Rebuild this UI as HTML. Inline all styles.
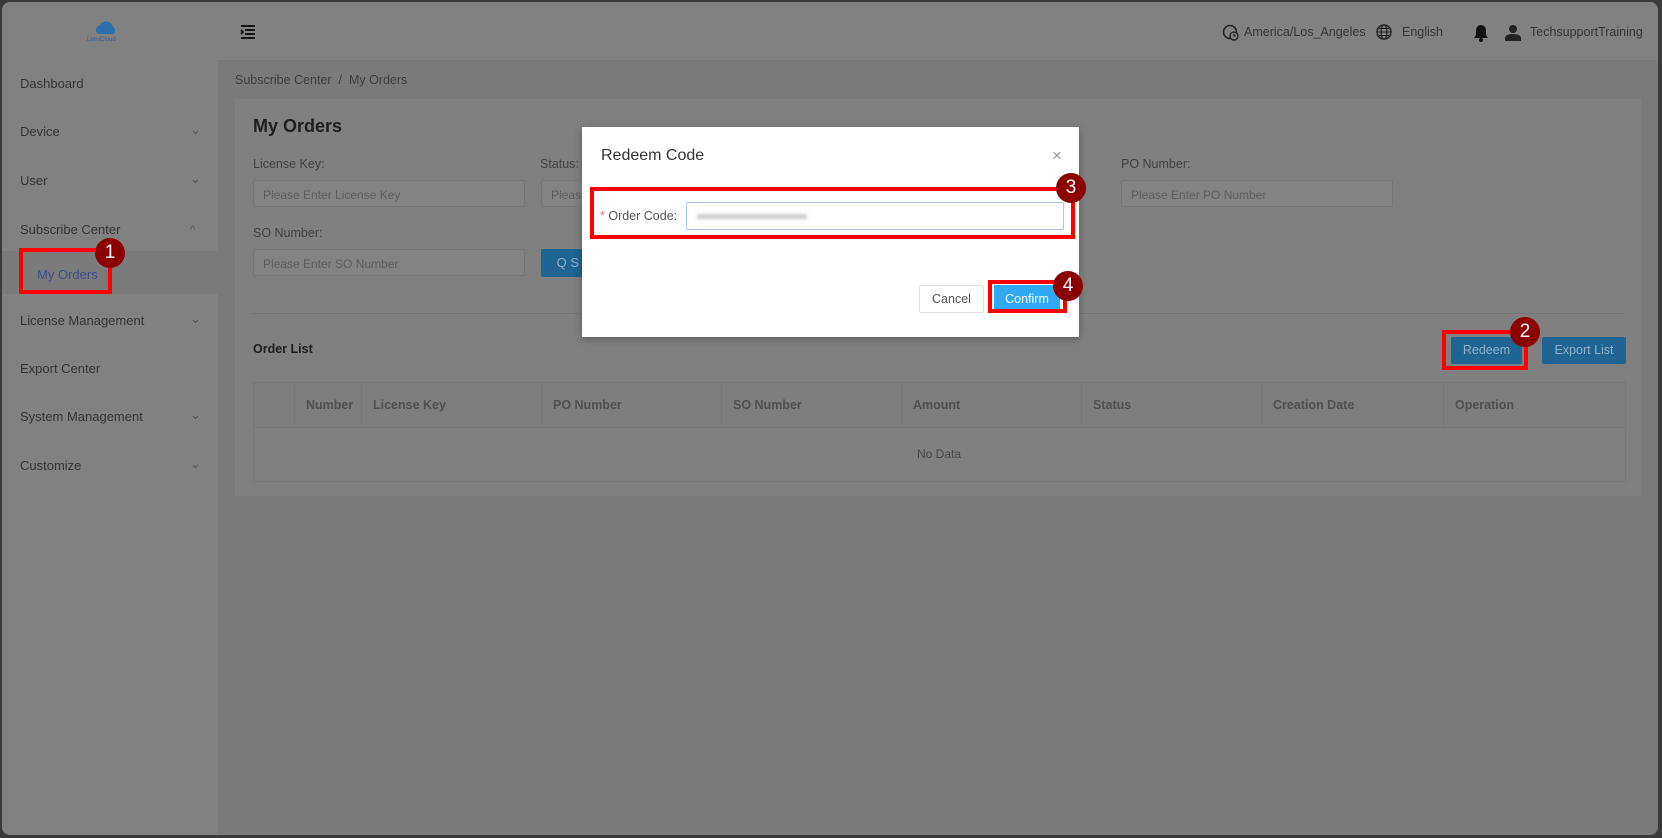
<!DOCTYPE html>
<html><head><meta charset="utf-8"><style>
*{box-sizing:border-box;margin:0;padding:0}
body{width:1662px;height:838px;background:#3a3a3a;font-family:"Liberation Sans",sans-serif;position:relative;overflow:hidden}
.frame{position:absolute;left:2px;top:2px;width:1656px;height:833px;background:#7a7a7a;border-radius:8px;overflow:hidden}
.abs{position:absolute}
.side{left:0;top:0;width:216px;height:833px;background:#818181}
.hdr{left:216px;top:0;right:0;height:59px;background:#818181;border-bottom:1px solid #777}
.t{position:absolute;font-size:13px;color:#353535;white-space:nowrap}
.card{left:233px;top:97px;width:1406px;height:397px;background:#808080}
.inp{position:absolute;height:27px;border:1px solid #767676;background:#838383;border-radius:2px;font-size:12px;color:#5e5e5e;padding:7px 9px;white-space:nowrap;overflow:hidden}
.btn{position:absolute;background:#1f6492;color:#8fb0c8;font-size:13px;text-align:center;border-radius:2px}
.th{position:absolute;top:0;height:45px;line-height:45px;font-size:12.5px;font-weight:bold;color:#505050;padding-left:11px;border-left:1px solid #787878}
.red{position:absolute;border:4px solid #f00}
.badge{position:absolute;width:30px;height:30px;border-radius:50%;background:#8b0000;color:#fff;font-size:19px;text-align:center;line-height:30px}
</style></head><body>
<div class="frame">
<div class="abs side">
 <svg class="abs" style="left:90px;top:18px" width="28" height="20" viewBox="0 0 28 20"><path d="M6 14a5 5 0 0 1 2-9 7 7 0 0 1 13 2 4 4 0 0 1 0 7z" fill="#2f6ea8"/></svg>
 <div class="t" style="left:85px;top:35px;font-size:6px;color:#2f5a9a">LumiCloud</div>
 <div class="t" style="left:18px;top:74px">Dashboard</div>
 <div class="t" style="left:18px;top:122px">Device</div><div class="t" style="left:188px;top:120px;color:#555">⌄</div>
 <div class="t" style="left:18px;top:171px">User</div><div class="t" style="left:188px;top:169px;color:#555">⌄</div>
 <div class="t" style="left:18px;top:220px">Subscribe Center</div><div class="t" style="left:188px;top:222px;color:#555;font-size:11px">^</div>
 <div class="abs" style="left:0;top:249px;width:216px;height:43px;background:#7b7b7b"></div>
 <div class="t" style="left:35px;top:265px;color:#3d4f8a">My Orders</div>
 <div class="t" style="left:18px;top:311px">License Management</div><div class="t" style="left:188px;top:309px;color:#555">⌄</div>
 <div class="t" style="left:18px;top:359px">Export Center</div>
 <div class="t" style="left:18px;top:407px">System Management</div><div class="t" style="left:188px;top:405px;color:#555">⌄</div>
 <div class="t" style="left:18px;top:456px">Customize</div><div class="t" style="left:188px;top:454px;color:#555">⌄</div>
</div>
<div class="abs hdr">
 <svg class="abs" style="left:22px;top:23px" width="16" height="14" viewBox="0 0 16 14"><path d="M1 1h14M5 5h10M5 9h10M1 13h14M1 5l2 2-2 2" stroke="#111" stroke-width="2" fill="none"/></svg>
 <svg class="abs" style="left:1004px;top:22px" width="17" height="17" viewBox="0 0 17 17"><circle cx="8" cy="8" r="6.5" stroke="#222" stroke-width="1.6" fill="none"/><circle cx="12" cy="12" r="4" fill="#818181" stroke="#222" stroke-width="1.4"/><path d="M12 10v2h1.5" stroke="#222" stroke-width="1.2" fill="none"/></svg>
 <div class="t" style="left:1026px;top:23px;font-size:12.5px">America/Los_Angeles</div>
 <svg class="abs" style="left:1158px;top:22px" width="16" height="16" viewBox="0 0 16 16"><circle cx="8" cy="8" r="7" stroke="#222" stroke-width="1.4" fill="none"/><ellipse cx="8" cy="8" rx="3" ry="7" stroke="#222" stroke-width="1.2" fill="none"/><path d="M1 8h14M2 4.5h12M2 11.5h12" stroke="#222" stroke-width="1.1"/></svg>
 <div class="t" style="left:1184px;top:23px;font-size:12.5px">English</div>
 <svg class="abs" style="left:1254px;top:22px" width="18" height="18" viewBox="0 0 18 18"><path d="M9 1a5 5 0 0 0-5 5v5l-2 3h14l-2-3V6a5 5 0 0 0-5-5z" fill="#111"/><circle cx="9" cy="16" r="2" fill="#111"/></svg>
 <svg class="abs" style="left:1287px;top:22px" width="16" height="17" viewBox="0 0 16 17"><circle cx="8" cy="5" r="4" fill="#222"/><path d="M0 17v-3c0-3 4-4 8-4s8 1 8 4v3z" fill="#222"/></svg>
 <div class="t" style="left:1312px;top:23px;font-size:12.5px">TechsupportTraining</div>
</div>
<div class="t" style="left:233px;top:71px;color:#3e3e3e;font-size:12.5px">Subscribe Center &nbsp;/&nbsp; My Orders</div>
<div class="abs card">
 <div class="t" style="left:18px;top:17px;font-size:18px;font-weight:bold;color:#1e1e1e">My Orders</div>
 <div class="t" style="left:18px;top:58px;color:#404040;font-size:12.5px">License Key:</div>
 <div class="t" style="left:305px;top:58px;color:#404040;font-size:12.5px">Status:</div>
 <div class="t" style="left:886px;top:58px;color:#404040;font-size:12.5px">PO Number:</div>
 <div class="inp" style="left:18px;top:81px;width:272px">Please Enter License Key</div>
 <div class="inp" style="left:306px;top:81px;width:60px">Pleas</div>
 <div class="inp" style="left:886px;top:81px;width:272px">Please Enter PO Number</div>
 <div class="t" style="left:18px;top:127px;color:#404040;font-size:12.5px">SO Number:</div>
 <div class="inp" style="left:18px;top:150px;width:272px">Please Enter SO Number</div>
 <div class="btn" style="left:306px;top:150px;width:50px;height:28px;line-height:28px">&nbsp;Q S</div>
 <div class="abs" style="left:18px;top:214px;width:1372px;height:1px;background:#747474"></div>
 <div class="t" style="left:18px;top:243px;font-weight:bold;color:#1e1e1e;font-size:12.5px">Order List</div>
 <div class="btn" style="left:1216px;top:238px;width:71px;height:27px;line-height:27px;font-size:12.5px">Redeem</div>
 <div class="btn" style="left:1307px;top:238px;width:84px;height:27px;line-height:27px;font-size:12.5px">Export List</div>
 <div class="abs" style="left:18px;top:283px;width:1373px;height:100px;border:1px solid #787878">
  <div class="abs" style="left:0;top:0;width:100%;height:45px;background:#7e7e7e;border-bottom:1px solid #777"></div>
  <div class="th" style="left:40px">Number</div><div class="th" style="left:107px">License Key</div>
  <div class="th" style="left:287px">PO Number</div><div class="th" style="left:467px">SO Number</div>
  <div class="th" style="left:647px">Amount</div><div class="th" style="left:827px">Status</div>
  <div class="th" style="left:1007px">Creation Date</div><div class="th" style="left:1189px">Operation</div>
  <div class="t" style="left:663px;top:64px;color:#474747;font-size:12px">No Data</div>
 </div>
</div>
<!-- modal -->
<div class="abs" style="left:580px;top:125px;width:497px;height:210px;background:#fff;box-shadow:0 2px 8px rgba(0,0,0,.3)">
 <div class="t" style="left:19px;top:20px;font-size:16px;color:#333">Redeem Code</div>
 <div class="t" style="left:470px;top:19px;font-size:17px;color:#999">×</div>
 <div class="t" style="left:18px;top:82px;color:#555;font-size:12.5px"><span style="color:#f56c6c">*</span> Order Code:</div>
 <div class="abs" style="left:104px;top:75px;width:378px;height:28px;border:1px solid #a8c8e8;border-radius:2px"><div class="abs" style="left:10px;top:11px;width:110px;height:5px;background:#ccc;filter:blur(1.5px)"></div></div>
 <div class="abs" style="left:337px;top:158px;width:65px;height:28px;border:1px solid #ddd;border-radius:2px;font-size:12.5px;color:#555;text-align:center;line-height:26px">Cancel</div>
 <div class="abs" style="left:412px;top:158px;width:66px;height:28px;background:#30a9f5;color:#fff;font-size:12.5px;text-align:center;line-height:28px">Confirm</div>
</div>
<div class="red" style="left:17px;top:246px;width:93px;height:46px"></div>
<div class="badge" style="left:93px;top:236px">1</div>
<div class="red" style="left:1440px;top:328px;width:86px;height:40px"></div>
<div class="badge" style="left:1508px;top:315px">2</div>
<div class="red" style="left:588px;top:185px;width:485px;height:52px"></div>
<div class="badge" style="left:1054px;top:171px">3</div>
<div class="red" style="left:986px;top:278px;width:79px;height:33px"></div>
<div class="badge" style="left:1051px;top:269px">4</div>
</div>
</body></html>
